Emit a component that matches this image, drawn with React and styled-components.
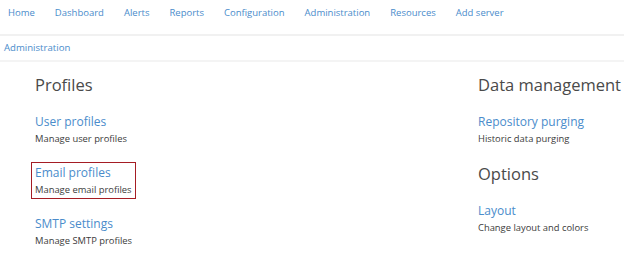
import styled, { createGlobalStyle } from 'styled-components'

const Global = createGlobalStyle`
    body {
        margin: 0;
        background: #ffffff;
        font-family: "Open Sans", "Noto Sans", sans-serif;
    }
`;

const TopNav = styled.nav`
    display: flex;
    gap: 20px;
    padding: 0 8px 10px;
    height: 24px;
    align-items: center;
    border-bottom: 2px solid #f1f1f1;
`;

const NavLink = styled.a`
    color: #4a8ccb;
    font-size: 9.5px;
    text-decoration: none;
    white-space: nowrap;
`;

const Crumbs = styled.div`
    height: 22px;
    padding: 0 4px 2px;
    display: flex;
    align-items: center;
    border-bottom: 2px solid #f4f4f4;
`;

const Crumb = styled.a`
    color: #4a8ccb;
    font-size: 9.6px;
    text-decoration: none;
`;

const Main = styled.div`
    display: flex;
    padding: 10px 0 0 35px;
`;

const Column = styled.div`
    width: ${p => p.$width}px;
    flex-shrink: 0;
    display: flex;
    flex-direction: column;
`;

const Heading = styled.h2`
    margin: -1px 0 13px;
    font-size: 16.5px;
    font-weight: 400;
    color: #4a4a4a;
    line-height: 26px;
    white-space: nowrap;
    &:first-child {
        margin-top: 0;
    }
`;

const Item = styled.div`
    margin: 0 -4px 14px;
    padding: 0 3px;
    border: 1px solid ${p => (p.$active ? '#a51d24' : 'transparent')};
    align-self: flex-start;
`;

const ItemLink = styled.a`
    display: block;
    color: #4a8ccb;
    font-size: 12px;
    line-height: 19px;
    text-decoration: none;
    white-space: nowrap;
`;

const ItemDesc = styled.div`
    color: #3c3c3c;
    font-size: 9.4px;
    line-height: 16px;
    white-space: nowrap;
`;

const nav = ['Home', 'Dashboard', 'Alerts', 'Reports', 'Configuration', 'Administration', 'Resources', 'Add server'];

function Section({ title, items }) {
    return (
        <>
            <Heading>{title}</Heading>
            {items.map(it => (
                <Item key={it.name} $active={it.active}>
                    <ItemLink href="#">{it.name}</ItemLink>
                    <ItemDesc>{it.desc}</ItemDesc>
                </Item>
            ))}
        </>
    )
}

export default function App() {
    return (
        <>
            <Global />
            <TopNav>
                {nav.map(n => <NavLink key={n} href="#">{n}</NavLink>)}
            </TopNav>
            <Crumbs>
                <Crumb href="#">Administration</Crumb>
            </Crumbs>
            <Main>
                <Column $width={443}>
                    <Section title="Profiles" items={[
                        { name: 'User profiles', desc: 'Manage user profiles' },
                        { name: 'Email profiles', desc: 'Manage email profiles', active: true },
                        { name: 'SMTP settings', desc: 'Manage SMTP profiles' },
                    ]} />
                </Column>
                <Column $width={146}>
                    <Section title="Data management" items={[
                        { name: 'Repository purging', desc: 'Historic data purging' },
                    ]} />
                    <Section title="Options" items={[
                        { name: 'Layout', desc: 'Change layout and colors' },
                    ]} />
                </Column>
            </Main>
        </>
    )
}
